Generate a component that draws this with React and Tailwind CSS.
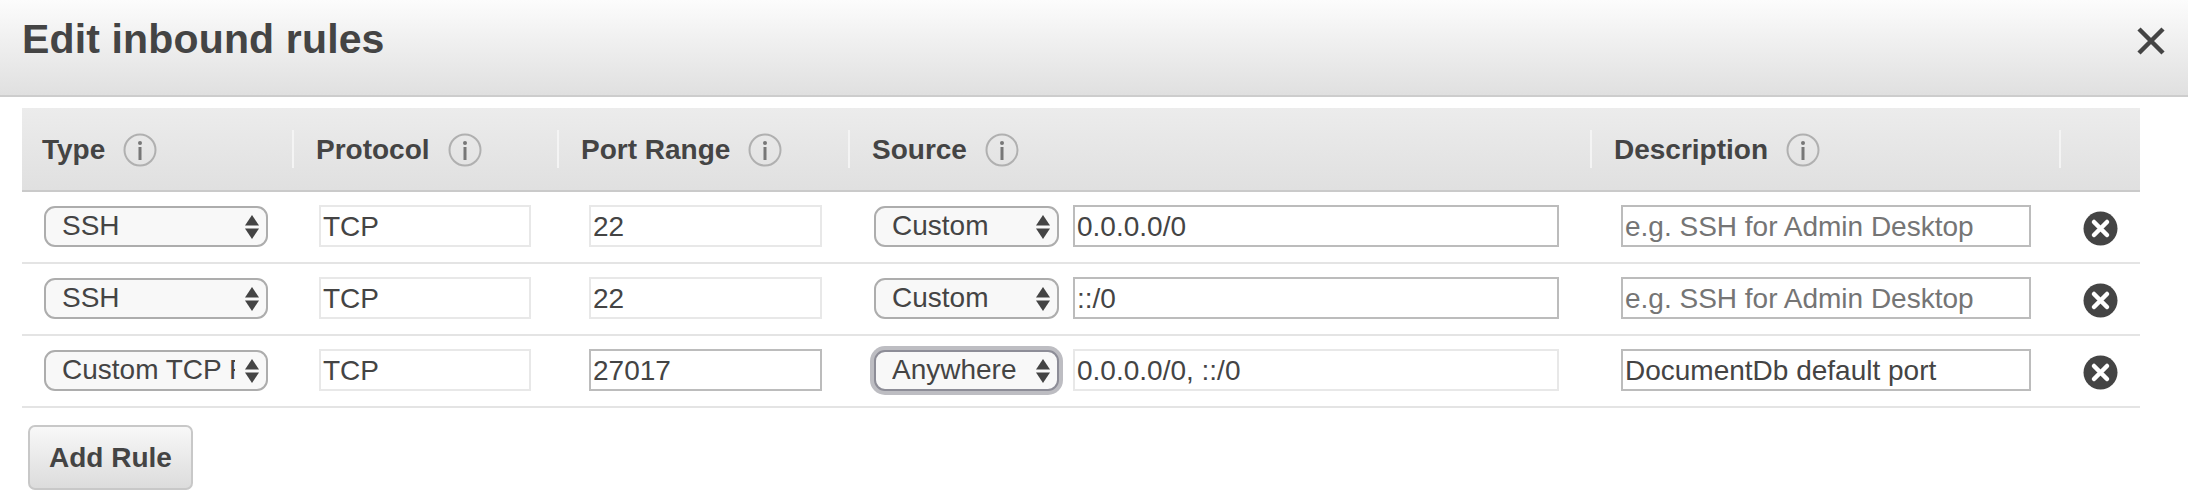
import React from "react";

const COLS = "grid grid-cols-[272px_265px_291px_742px_469px_79px]";

const rules = [
  { type: "SSH", port: "22", source: "Custom", cidr: "0.0.0.0/0", desc: "", portOn: false, cidrOn: true },
  { type: "SSH", port: "22", source: "Custom", cidr: "::/0", desc: "", portOn: false, cidrOn: true },
  { type: "Custom TCP Rule", port: "27017", source: "Anywhere", cidr: "0.0.0.0/0, ::/0", desc: "DocumentDb default port", portOn: true, cidrOn: false, focused: true },
];

function InfoIcon() {
  return (
    <svg width="34" height="34" viewBox="0 0 34 34" className="shrink-0">
      <circle cx="17" cy="17" r="15.5" fill="none" stroke="#b0b0b0" strokeWidth="2" />
      <circle cx="17" cy="10" r="2" fill="#777" />
      <rect x="15.5" y="14" width="3" height="13" fill="#777" />
    </svg>
  );
}

function HeadCell({ label, divider = true, info = true, pad = "pl-[22px]" }) {
  return (
    <div className={`flex items-center gap-[18px] h-[38px] pt-[2px] ${pad} ${divider ? "border-r-2 border-[#f4f4f4]" : ""}`}>
      {label && <span className="text-[28px] font-bold text-[#444]">{label}</span>}
      {info && <InfoIcon />}
    </div>
  );
}

function SelectBox({ value, options, width, focused }) {
  return (
    <div className={`relative h-[41px] ${width}`}>
      <select
        defaultValue={value}
        className={`appearance-none w-full h-full rounded-[11px] bg-[#f8f8f8] pl-[16px] pr-[31px] pb-[1px] text-[28px] leading-[32px] text-[#444] outline-none border-2 ${
          focused ? "border-[#8d8d97] shadow-[0_0_0_4px_#bdbdc2]" : "border-[#adadad]"
        }`}
      >
        {options.map((o) => (
          <option key={o}>{o}</option>
        ))}
      </select>
      <svg width="14" height="24" viewBox="0 0 14 24" className="absolute right-[9px] top-[9px] pointer-events-none">
        <path d="M7 0 L14 10.5 L0 10.5 Z" fill="#444" />
        <path d="M7 24 L14 13.5 L0 13.5 Z" fill="#444" />
      </svg>
    </div>
  );
}

function TextBox({ value, placeholder, width, on }) {
  return (
    <input
      readOnly
      value={value}
      placeholder={placeholder}
      className={`h-[42px] ${width} bg-white pl-[2px] pt-[2px] text-[28px] text-[#444] placeholder:text-[#757575] outline-none border-2 ${
        on ? "border-[#bcbcbc]" : "border-[#e8e8e8]"
      }`}
    />
  );
}

function RemoveIcon() {
  return (
    <svg width="35" height="35" viewBox="0 0 35 35">
      <circle cx="17.5" cy="17.5" r="17" fill="#444" />
      <path d="M11 11 L24 24 M24 11 L11 24" stroke="#fff" strokeWidth="4.5" strokeLinecap="round" />
    </svg>
  );
}

function Row({ rule }) {
  return (
    <div className={`${COLS} h-[72px] pb-[2px] items-center border-b-2 border-[#e4e4e4]`}>
      <div className="pl-[22px]">
        <SelectBox value={rule.type} options={["SSH", "Custom TCP Rule"]} width="w-[224px]" />
      </div>
      <div className="pl-[25px]">
        <TextBox value="TCP" width="w-[212px]" />
      </div>
      <div className="pl-[30px]">
        <TextBox value={rule.port} width="w-[233px]" on={rule.portOn} />
      </div>
      <div className="flex items-center gap-[14px] pl-[24px]">
        <SelectBox value={rule.source} options={["Custom", "Anywhere"]} width="w-[185px]" focused={rule.focused} />
        <TextBox value={rule.cidr} width="w-[486px]" on={rule.cidrOn} />
      </div>
      <div className="pl-[29px]">
        <TextBox value={rule.desc} placeholder="e.g. SSH for Admin Desktop" width="w-[410px]" on />
      </div>
      <div className="flex pl-[22px] pt-[5px]">
        <RemoveIcon />
      </div>
    </div>
  );
}

export default function App() {
  return (
    <div className="w-[2188px] h-[502px] overflow-hidden bg-white font-['Liberation_Sans',Arial,sans-serif]">
      <div className="flex h-[97px] items-start justify-between border-b-2 border-[#cdcdcd] bg-gradient-to-b from-[#fcfcfc] to-[#e0e0e0] pl-[22px] pr-[23px]">
        <h1 className="mt-[16px] text-[41px] leading-[46px] font-bold text-[#444] tracking-[0.15px]">Edit inbound rules</h1>
        <svg width="28" height="28" viewBox="0 0 28 28" className="mt-[27px]">
          <path d="M2 2 L26 26 M26 2 L2 26" stroke="#444" strokeWidth="4.5" />
        </svg>
      </div>

      <div className="mx-[22px] mt-[11px] w-[2118px]">
        <div className={`${COLS} h-[84px] items-center border-b-2 border-[#cacaca] bg-gradient-to-b from-[#ececec] to-[#e0e0e0]`}>
          <HeadCell label="Type" pad="pl-[20px]" />
          <HeadCell label="Protocol" />
          <HeadCell label="Port Range" />
          <HeadCell label="Source" />
          <HeadCell label="Description" />
          <HeadCell divider={false} info={false} />
        </div>
        {rules.map((r, i) => (
          <Row key={i} rule={r} />
        ))}
        <button className="mt-[17px] ml-[6px] h-[65px] w-[165px] rounded-[7px] border-2 border-[#c8c8c8] bg-gradient-to-b from-[#f8f8f8] to-[#dcdcdc] text-[28px] font-bold text-[#444]">
          Add Rule
        </button>
      </div>
    </div>
  );
}
